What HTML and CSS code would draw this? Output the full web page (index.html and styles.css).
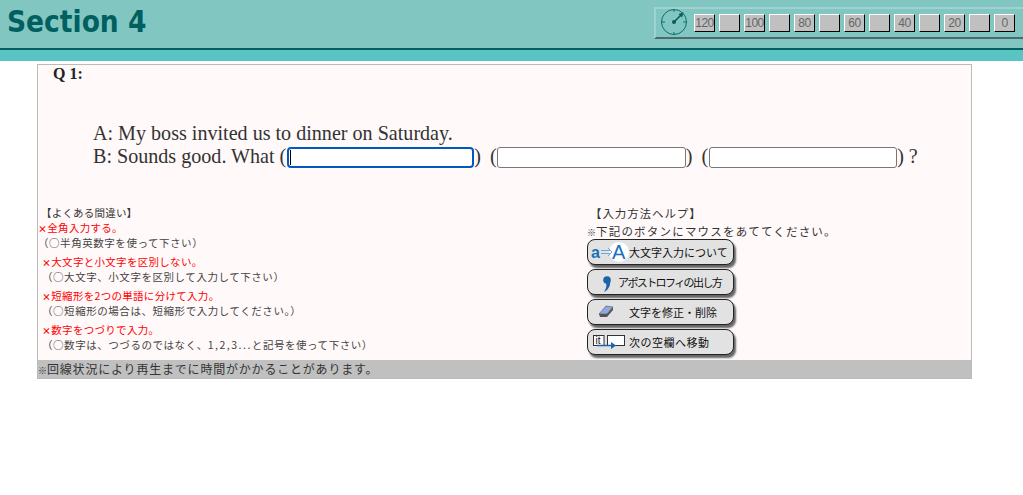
FILE: index.html
```html
<!DOCTYPE html>
<html lang="ja">
<head>
<meta charset="utf-8">
<title>Section 4</title>
<link rel="stylesheet" href="styles.css">
</head>
<body>
<header class="header">
  <h1 class="title">Section 4</h1>
  <div class="timer">
    <svg class="clock" width="38" height="28" viewBox="0 0 38 28">
      <circle cx="19" cy="14" r="12.500" fill="none" stroke="#0a6e6e" stroke-width="1"/>
      <path d="M19 1v3M19 24v3M6 14h4M28 14h4" stroke="#0a6e6e" stroke-width="1"/>
      <path d="M19 14L26 7" stroke="#0a5c5c" stroke-width="1.600"/>
      <path d="M28.500 4.500L27 9.500L23.500 6Z" fill="#0a5c5c"/>
      <circle cx="19" cy="14" r="2" fill="#0a5c5c"/>
    </svg>
    <span class="cell">120</span><span class="cell"></span><span class="cell">100</span><span class="cell"></span><span class="cell">80</span><span class="cell"></span><span class="cell">60</span><span class="cell"></span><span class="cell">40</span><span class="cell"></span><span class="cell">20</span><span class="cell"></span><span class="cell">0</span>
  </div>
</header>
<div class="band"></div>
<main class="card">
  <div class="q">Q 1:</div>
  <div class="dialog">
    <div class="line">A: My boss invited us to dinner on Saturday.</div>
    <div class="line">B: Sounds good. What (<span class="field focus"><i class="caret"></i></span>)<span class="gap"></span>(<span class="field"></span>)<span class="gap"></span>(<span class="field nudge"></span>) ?</div>
  </div>
  <div class="columns">
    <section class="mistakes">
      <div class="m-head">【よくある間違い】</div>
      <div class="err first"><span class="x">×</span>全角入力する。</div>
      <div class="fix first">（○半角英数字を使って下さい）</div>
      <div class="err"><span class="x">×</span>大文字と小文字を区別しない。</div>
      <div class="fix">（○大文字、小文字を区別して入力して下さい）</div>
      <div class="err"><span class="x">×</span>短縮形を2つの単語に分けて入力。</div>
      <div class="fix">（○短縮形の場合は、短縮形で入力してください。）</div>
      <div class="err"><span class="x">×</span>数字をつづりで入力。</div>
      <div class="fix">（○数字は、つづるのではなく、<span class="num">1,2,3...</span>と記号を使って下さい）</div>
    </section>
    <section class="help">
      <div class="h-head">【入力方法ヘルプ】</div>
      <div class="h-note"><span class="kome">※</span>下記のボタンにマウスをあててください。</div>
      <div class="btn">
        <svg class="ico" width="41" height="22" viewBox="0 0 41 22">
          <circle cx="31" cy="11" r="10" fill="#fff"/>
          <path d="M13 9.500h9M13 12.500h9M20 7l4 4-4 4" fill="none" stroke="#6fa8d8" stroke-width="1"/>
          <text x="3" y="17" class="ico-a">a</text>
          <text x="24" y="18" class="ico-b">A</text>
        </svg>
        <span>大文字入力について</span>
      </div>
      <div class="btn">
        <svg class="ico" width="30" height="22" viewBox="0 0 30 22">
          <circle cx="19" cy="9" r="3.800" fill="#1c63a8"/>
          <path d="M22 9c1 6-2 10-6 12 2-3 3-6 2-9z" fill="#1c63a8"/>
        </svg>
        <span class="tight">アポストロフィの出し方</span>
      </div>
      <div class="btn">
        <svg class="ico" width="41" height="22" viewBox="0 0 41 22">
          <polygon points="11,13 18,5 25,6 19,13" fill="#8fa8e0" stroke="#555" stroke-width=".6"/>
          <polygon points="11,13 19,13 25,6 25,9 19,16 12,16" fill="#555"/>
        </svg>
        <span>文字を修正・削除</span>
      </div>
      <div class="btn">
        <svg class="ico" width="41" height="22" viewBox="0 0 41 22">
          <rect x="5.500" y="4.500" width="10.500" height="10" fill="#fff" stroke="#333"/>
          <text x="7.500" y="13" class="ico-it">it</text>
          <rect x="19.500" y="4.500" width="17" height="10" fill="#fff" stroke="#333"/>
          <path d="M9 14.500h16" stroke="#1c63a8" stroke-width="1.500"/>
          <path d="M23 11l5 3.500-5 3.500z" fill="#1c63a8"/>
        </svg>
        <span class="loose">次の空欄へ移動</span>
      </div>
    </section>
  </div>
  <div class="footer"><span class="kome">※</span>回線状況により再生までに時間がかかることがあります。</div>
</main>
</body>
</html>
```
FILE: styles.css
```css
* { box-sizing: border-box; }
html, body { margin: 0; padding: 0; background: #fff; }
body { font-family: "Noto Sans CJK JP", sans-serif; color: #333; overflow: hidden; }

.header {
  height: 50px;
  background: #82c6c2;
  border-bottom: 2px solid #005f5f;
  display: flex;
  justify-content: space-between;
  padding: 7px 0 0 7px;
}
.title {
  margin: 0;
  font: bold 29.500px/30px "DejaVu Sans", sans-serif;
  font-stretch: condensed;
  color: #006060;
}
.timer {
  width: 369px;
  height: 32px;
  background: #82c6c2;
  border-top: 2px solid #9fd3d0;
  border-left: 2px solid #9fd3d0;
  border-bottom: 2px solid #4f6a6a;
  display: flex;
  align-items: flex-start;
  padding: 5px 0 0 0;
}
.clock { margin: -6px 1px 0 -1px; flex: none; }
.cell {
  width: 21px;
  height: 18px;
  margin-right: 4px;
  flex: none;
  background: #c0c0c0;
  border-top: 1px solid #fff;
  border-left: 1px solid #fff;
  border-right: 1px solid #000;
  border-bottom: 1px solid #000;
  color: #666;
  font: 12px/16px "Liberation Sans", sans-serif;
  text-align: center;
  letter-spacing: -.5px;
  overflow: hidden;
}
.band { height: 11px; background: #5ac4c4; }

.card {
  width: 935px;
  height: 315px;
  margin: 3px 0 0 37px;
  background: #fff9f9;
  border: 1px solid #bbb;
  display: flex;
  flex-direction: column;
}
.q {
  font: bold 16px/16px "Liberation Serif", serif;
  color: #222;
  padding: 1px 0 0 15px;
}
.dialog {
  margin: 40px 0 0 55px;
  font: 20.100px/23px "Liberation Serif", serif;
  color: #333;
}
.line { height: 23px; white-space: nowrap; display: flex; align-items: center; }
.gap { width: 9px; }
.field {
  width: 189px;
  height: 21px;
  margin-top: 2px;
  background: #fff;
  border: 1px solid #777;
  border-radius: 3px;
  display: block;
  position: relative;
  flex: none;
}
.field.nudge { width: 188px; margin-left: 1px; }
.field.focus {
  width: 187px;
  margin-left: 1px;
  border: 2px solid #0058c0;
  border-radius: 4px;
}
.caret {
  position: absolute;
  left: 1px;
  top: 1px;
  width: 1px;
  height: 15px;
  background: #000;
}
.columns { flex: 1; display: flex; min-height: 0; }
.mistakes { width: 549px; padding-top: 38px; }
.m-head { font-size: 10.500px; line-height: 14px; padding-left: 3px; letter-spacing: .2px; }
.err { color: #f00; font-size: 10.500px; line-height: 14px; margin-top: 5px; padding-left: 4px; letter-spacing: .3px; white-space: nowrap; }
.x { font-size: 9px; font-weight: bold; line-height: 0; }
.fix { font-size: 10.500px; line-height: 14px; margin-top: 1px; padding-left: 4px; letter-spacing: .55px; white-space: nowrap; color: #444; }
.err.first { margin-top: 1px; padding-left: 0; }
.fix.first { padding-left: 0; }
.num { letter-spacing: 1.500px; }
.help { padding-top: 37px; }
.h-head { font-size: 11.500px; line-height: 16px; padding-left: 3px; letter-spacing: .9px; }
.h-note { font-size: 11.500px; line-height: 16px; letter-spacing: 1.200px; white-space: nowrap; margin-top: 2px; }
.kome { font-size: 9px; letter-spacing: 0; line-height: 0; }
.btn {
  width: 147px;
  height: 26px;
  margin-bottom: 4px;
  background: #e2e2e2;
  border: 1px solid #222;
  border-radius: 8px;
  box-shadow: 2px 3px 2px #666;
  display: flex;
  align-items: center;
  font-size: 11px;
  color: #111;
  white-space: nowrap;
  overflow: hidden;
}
.tight { letter-spacing: -1.600px; }
.loose { letter-spacing: .5px; }
.ico { flex: none; }
.ico-a { font: bold 16px "Liberation Sans", sans-serif; fill: #1c70b8; }
.ico-b { font: 20px "Liberation Sans", sans-serif; fill: #1c70b8; }
.ico-it { font: 10px "Liberation Sans", sans-serif; fill: #111; }
.footer {
  height: 18px;
  background: #c0c0c0;
  font-size: 12px;
  line-height: 17px;
  letter-spacing: .8px;
  color: #333;
  white-space: nowrap;
}
```
